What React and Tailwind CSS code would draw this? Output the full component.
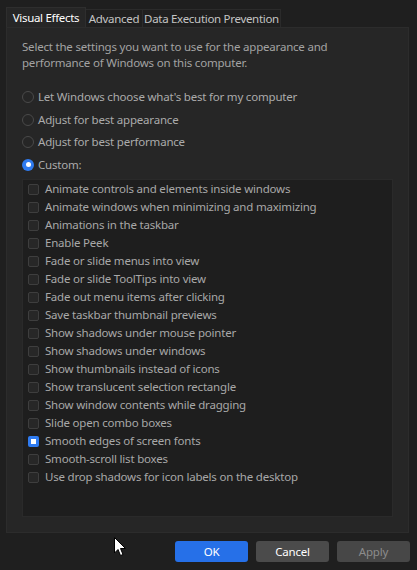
import React from "react";

const options = [
  "Let Windows choose what's best for my computer",
  "Adjust for best appearance",
  "Adjust for best performance",
  "Custom:",
];

const effects = [
  "Animate controls and elements inside windows",
  "Animate windows when minimizing and maximizing",
  "Animations in the taskbar",
  "Enable Peek",
  "Fade or slide menus into view",
  "Fade or slide ToolTips into view",
  "Fade out menu items after clicking",
  "Save taskbar thumbnail previews",
  "Show shadows under mouse pointer",
  "Show shadows under windows",
  "Show thumbnails instead of icons",
  "Show translucent selection rectangle",
  "Show window contents while dragging",
  "Slide open combo boxes",
  "Smooth edges of screen fonts",
  "Smooth-scroll list boxes",
  "Use drop shadows for icon labels on the desktop",
];

function Radio({ label, checked }) {
  return (
    <div className="flex items-center h-[22.5px]">
      {checked ? (
        <span className="w-[12px] h-[12px] rounded-full bg-[#2f7bf0] flex items-center justify-center">
          <span className="w-[5px] h-[5px] rounded-full bg-white" />
        </span>
      ) : (
        <span className="w-[12px] h-[12px] rounded-full border border-[#4a4a4a] bg-[#262626]" />
      )}
      <span className="ml-[4px] text-[#ababab]">{label}</span>
    </div>
  );
}

function Check({ label, checked }) {
  return (
    <div className="flex items-center h-[18px] pl-[5px]">
      {checked ? (
        <span className="w-[11px] h-[11px] rounded-[2px] bg-[#2f7bf0] flex items-center justify-center">
          <span className="w-[5px] h-[5px] bg-white" />
        </span>
      ) : (
        <span className="w-[11px] h-[11px] rounded-[2px] border border-[#3e3e3e] bg-[#272727]" />
      )}
      <span className="ml-[6px] text-[#a8a8a8]">{label}</span>
    </div>
  );
}

export default function App() {
  return (
    <div
      className="relative w-[417px] h-[570px] bg-[#1f1f1f] text-[11.5px] tracking-[-0.2px] leading-[16px] overflow-hidden"
      style={{ fontFamily: '"Noto Sans", "Open Sans", sans-serif' }}
    >
      <div className="flex items-end pl-[6px] pt-[7px] whitespace-nowrap tracking-[-0.3px]">
        <div className="h-[20px] w-[80px] flex items-center justify-center bg-[#262626] border border-b-0 border-[#2e2e2e] text-white">
          Visual Effects
        </div>
        <div className="h-[18px] w-[57px] flex items-center justify-center border border-b-0 border-l-0 border-[#2b2b2b] text-[#c4c4c4]">
          Advanced
        </div>
        <div className="h-[18px] w-[138px] flex items-center justify-center border border-b-0 border-l-0 border-[#2b2b2b] text-[#c4c4c4]">
          Data Execution Prevention
        </div>
      </div>

      <div className="ml-[6px] w-[403px] h-[506px] bg-[#262626] border border-[#2c2c2c] px-[15px]">
        <p className="pt-[11px] text-[#a3a3a3]">
          Select the settings you want to use for the appearance and
          <br />
          performance of Windows on this computer.
        </p>
        <div className="mt-[15px]">
          {options.map((o, i) => (
            <Radio key={o} label={o} checked={i === 3} />
          ))}
        </div>
        <div className="mt-[3px] w-[371px] h-[338px] bg-[#1e1e1e] border border-[#2a2a2a]">
          {effects.map((e) => (
            <Check key={e} label={e} checked={e === "Smooth edges of screen fonts"} />
          ))}
        </div>
      </div>

      <div className="flex justify-end gap-[8px] pr-[7px] mt-[8px]">
        <button className="w-[73px] h-[21px] rounded-[3px] bg-[#2670e8] text-white">OK</button>
        <button className="w-[73px] h-[21px] rounded-[3px] bg-[#4b4b4b] text-white">Cancel</button>
        <button className="w-[73px] h-[21px] rounded-[3px] bg-[#474747] text-[#8c8c8c]">Apply</button>
      </div>

      <svg className="absolute left-[114px] top-[537px]" width="13" height="20" viewBox="0 0 13 20">
        <path d="M0.5 0.5 L0.5 16 L4 12.5 L6.5 18.5 L9 17.5 L6.5 11.5 L11.5 11.5 Z" fill="white" stroke="black" strokeWidth="1" />
      </svg>
    </div>
  );
}
